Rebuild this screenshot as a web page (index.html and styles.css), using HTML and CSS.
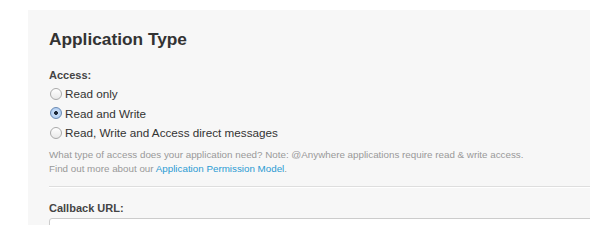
FILE: index.html
```html
<!DOCTYPE html>
<html lang="en">
<head>
    <meta charset="UTF-8">
    <meta name="viewport" content="width=device-width, initial-scale=1.0">
    <title>Application Type</title>
    <link rel="stylesheet" href="styles.css">
</head>
<body>
    <div class="panel">
        <h2>Application Type</h2>

        <!-- Tipo de acceso -->
        <fieldset class="access">
            <div class="label">Access:</div>
            <label class="option"><input type="radio" name="access" value="read"> Read only</label>
            <label class="option"><input type="radio" name="access" value="write" checked> Read and Write</label>
            <label class="option"><input type="radio" name="access" value="dm"> Read, Write and Access direct messages</label>
            <p class="hint">What type of access does your application need? Note: @Anywhere applications require read &amp; write access.<br>
            Find out more about our <a href="#">Application Permission Model</a>.</p>
        </fieldset>

        <hr>

        <div class="field">
            <div class="label">Callback URL:</div>
            <input type="text" class="text">
        </div>
    </div>
</body>
</html>
```

FILE: styles.css
```css
html {
    overflow: hidden;
}

body {
    font-family: "Liberation Sans", Arial, sans-serif;
    background-color: #fff;
    margin: 0;
    padding: 10px 0 0 28px;
    color: #333;
    height: 215px;
    overflow: hidden;
}

.panel {
    background-color: #f7f7f7;
    padding: 18px 0 0 21px;
    margin-right: -60px;
    height: 300px;
}

h2 {
    margin: 0 0 18px;
    font-size: 17.3px;
    line-height: 22px;
    color: #333;
}

.access {
    border: 0;
    margin: 0;
    padding: 0;
}

.label {
    font-size: 11px;
    font-weight: bold;
    line-height: 14px;
    color: #444;
    margin-bottom: 2px;
}

.option {
    display: flex;
    align-items: center;
    font-size: 11.7px;
    line-height: 19.5px;
    color: #333;
}

.option input {
    appearance: none;
    -webkit-appearance: none;
    width: 12px;
    height: 12px;
    margin: 0 3px 0 1px;
    border: 1px solid #a9a9a9;
    border-radius: 50%;
    background: linear-gradient(#fff, #e9e9e9);
    box-sizing: border-box;
}

.option input:checked {
    border-color: #6a8ab3;
    background: radial-gradient(circle, #1f2a3a 0, #1f2a3a 1.6px, #c9def7 2.2px, #9fc2ee 100%);
}

.hint {
    margin: 5px 0 0;
    font-size: 9.8px;
    line-height: 14px;
    color: #999;
}

.hint a {
    color: #2b9bd3;
    text-decoration: none;
}

hr {
    border: 0;
    border-top: 1px solid #dedede;
    border-bottom: 1px solid #fff;
    margin: 10px 0 0;
}

.field {
    padding-top: 13px;
}

.field .label {
    margin-bottom: 3px;
}

.text {
    display: block;
    width: 100%;
    height: 26px;
    border: 1px solid #ccc;
    border-radius: 3px;
    background: #fff;
    box-sizing: border-box;
}
```
